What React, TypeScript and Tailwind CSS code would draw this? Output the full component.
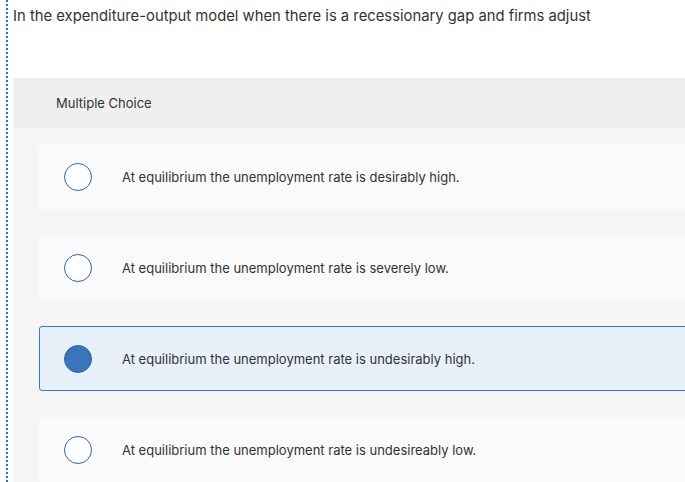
import React from 'react';

type Choice = {
  id: string;
  text: string;
};

const CHOICES: Choice[] = [
  { id: 'a', text: 'At equilibrium the unemployment rate is desirably high.' },
  { id: 'b', text: 'At equilibrium the unemployment rate is severely low.' },
  { id: 'c', text: 'At equilibrium the unemployment rate is undesirably high.' },
  { id: 'd', text: 'At equilibrium the unemployment rate is undesireably low.' },
];

const SELECTED = 'c';

const Radio: React.FC<{ checked: boolean }> = ({ checked }) => (
  <div
    className={
      checked
        ? 'w-[28px] h-[28px] rounded-full bg-[#3a74b9] border-[1.5px] border-[#2f65a6] shrink-0'
        : 'w-[28px] h-[28px] rounded-full bg-white border-[1.5px] border-[#2f65a6] shrink-0'
    }
  />
);

export default function App() {
  return (
    <div className="h-[482px] w-[685px] overflow-hidden bg-white" style={{ fontFamily: 'Inter, sans-serif' }}>
      <div className="ml-[6px] h-full border-l-2 border-dotted border-[#3270bf] pl-[5px]">
        <p className="pt-[6px] text-[14.8px] leading-[20px] text-[#333]">
          In the expenditure-output model when there is a recessionary gap and firms adjust
        </p>

        <div className="mt-[52px] w-[720px]">
          <div className="h-[50px] bg-[#efefef] pl-[43px] pt-[2px] flex items-center text-[13px] text-[#333]">
            Multiple Choice
          </div>

          <div className="bg-[#f5f5f5] pl-[26px] pt-[16px] flex flex-col gap-[26px]">
            {CHOICES.map((c) => {
              const checked = c.id === SELECTED;
              return (
                <div
                  key={c.id}
                  className={
                    checked
                      ? 'h-[65px] flex items-center pl-[24px] rounded-[3px] border border-[#3a78c4] bg-[#e8f0fa]'
                      : 'h-[65px] flex items-center pl-[25px] rounded-[3px] bg-[#fafafa]'
                  }
                >
                  <Radio checked={checked} />
                  <span className="ml-[30px] pt-[2px] text-[13px] text-[#333]">{c.text}</span>
                </div>
              );
            })}
          </div>
        </div>
      </div>
    </div>
  );
}
